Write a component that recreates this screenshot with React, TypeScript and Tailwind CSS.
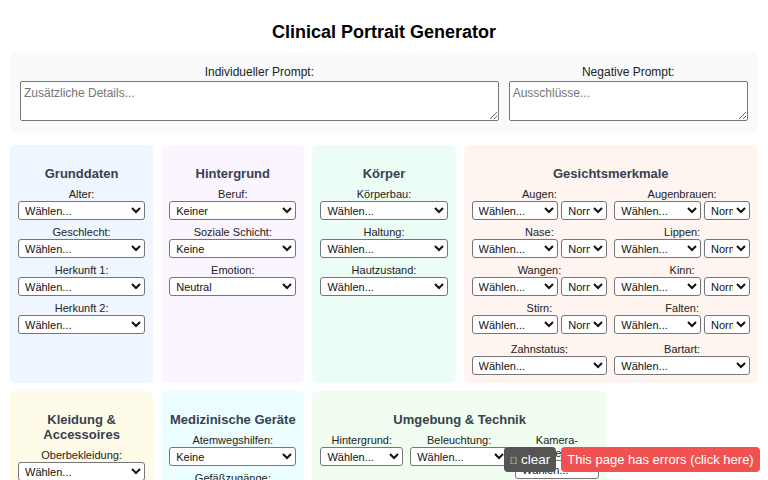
import React from "react";

const selCls =
  "h-[19px] w-full min-w-0 border border-[#767676] rounded-[3px] bg-white text-[11px] text-[#111] pl-[2px]";

function Field({ label, value = "Wählen...", opts }: { label: string; value?: string; opts?: string[] }) {
  const options = opts ?? [value];
  return (
    <div className="flex flex-col mb-[6px]">
      <label className="text-[11px] leading-[13px] text-center text-[#222]">{label}</label>
      <select className={selCls} defaultValue={value}>
        {options.map((o) => (
          <option key={o}>{o}</option>
        ))}
      </select>
    </div>
  );
}

function PairField({ label }: { label: string }) {
  return (
    <div className="flex flex-col mb-[6px]">
      <label className="text-[11px] leading-[13px] text-center text-[#222]">{label}</label>
      <div className="flex gap-[3px]">
        <select className={selCls + " flex-1"} defaultValue="Wählen...">
          <option>Wählen...</option>
        </select>
        <select
          className="h-[19px] w-[46px] shrink-0 border border-[#767676] rounded-[3px] bg-white text-[11px] text-[#111] pl-[2px]"
          defaultValue="Normal"
        >
          <option>Normal</option>
        </select>
      </div>
    </div>
  );
}

function Card({ title, bg, className = "", children }: { title: string; bg: string; className?: string; children: React.ReactNode }) {
  return (
    <div className={"rounded-[5px] p-[8px] pb-[2px] " + bg + " " + className}>
      <h3 className="text-[13px] leading-[15px] font-bold text-center text-[#374151] mt-[13px] mb-[7px]">{title}</h3>
      {children}
    </div>
  );
}

export default function App() {
  return (
    <div className="relative min-h-[480px] bg-white p-[10px] font-['Liberation_Sans',Arial,sans-serif] text-[#222]">
      <h1 className="text-center text-[18px] leading-[21px] font-bold text-black mt-[12px] mb-[10px]">
        Clinical Portrait Generator
      </h1>

      <div className="bg-[#f8fafc] rounded-[6px] px-[10px] pt-[12px] pb-[12px] grid grid-cols-[2fr_1fr] gap-[10px]">
        <div className="flex flex-col">
          <label className="text-[12px] leading-[14px] text-center mb-[2px]">Individueller Prompt:</label>
          <textarea
            className="h-[40px] border border-[#767676] rounded-[2px] bg-white text-[12px] px-[3px] py-[2px] placeholder:text-[#757575]"
            placeholder="Zusätzliche Details..."
          />
        </div>
        <div className="flex flex-col">
          <label className="text-[12px] leading-[14px] text-center mb-[2px]">Negative Prompt:</label>
          <textarea
            className="h-[40px] border border-[#767676] rounded-[2px] bg-white text-[12px] px-[3px] py-[2px] placeholder:text-[#757575]"
            placeholder="Ausschlüsse..."
          />
        </div>
      </div>

      <div className="grid grid-cols-5 gap-[8px] mt-[12px]">
        <Card title="Grunddaten" bg="bg-[#eff6ff]">
          <Field label="Alter:" />
          <Field label="Geschlecht:" />
          <Field label="Herkunft 1:" />
          <Field label="Herkunft 2:" />
        </Card>
        <Card title="Hintergrund" bg="bg-[#faf5ff]">
          <Field label="Beruf:" value="Keiner" />
          <Field label="Soziale Schicht:" value="Keine" />
          <Field label="Emotion:" value="Neutral" />
        </Card>
        <Card title="Körper" bg="bg-[#ecfdf5]">
          <Field label="Körperbau:" />
          <Field label="Haltung:" />
          <Field label="Hautzustand:" />
        </Card>
        <Card title="Gesichtsmerkmale" bg="bg-[#fef4f0]" className="col-span-2">
          <div className="grid grid-cols-2 gap-x-[7px]">
            <PairField label="Augen:" />
            <PairField label="Augenbrauen:" />
            <PairField label="Nase:" />
            <PairField label="Lippen:" />
            <PairField label="Wangen:" />
            <PairField label="Kinn:" />
            <PairField label="Stirn:" />
            <PairField label="Falten:" />
          </div>
          <div className="grid grid-cols-2 gap-x-[7px] mt-[3px]">
            <Field label="Zahnstatus:" />
            <Field label="Bartart:" />
          </div>
        </Card>

        <Card title="Kleidung & Accessoires" bg="bg-[#fefce8]">
          <Field label="Oberbekleidung:" />
          <Field label="Unterbekleidung:" />
          <Field label="Accessoires:" />
        </Card>
        <Card title="Medizinische Geräte" bg="bg-[#ecfeff]">
          <Field label="Atemwegshilfen:" value="Keine" />
          <Field label="Gefäßzugänge:" value="Keine" />
          <Field label="Monitoring:" value="Keine" />
        </Card>
        <Card title="Umgebung & Technik" bg="bg-[#f0fdf0]" className="col-span-2">
          <div className="grid grid-cols-[83fr_98fr_84fr] gap-x-[7px]">
            <Field label="Hintergrund:" />
            <Field label="Beleuchtung:" />
            <Field label="Kamera-Perspektive:" />
          </div>
        </Card>
      </div>

      <div className="fixed bottom-[8px] right-[8px] flex gap-[5px] leading-[15px] text-white font-['Liberation_Sans',Arial,sans-serif]">
        <button className="h-[25px] w-[52px] px-0 rounded-[4px] bg-[#555555] text-white whitespace-nowrap text-[13.5px]">
          <span className="text-[10px]">{"\uf1f8"}</span> clear
        </button>
        <button className="h-[25px] w-[199px] px-0 rounded-[4px] bg-[#f05252] text-white text-[13px] whitespace-nowrap">
          This page has errors (click here)
        </button>
      </div>
    </div>
  );
}
